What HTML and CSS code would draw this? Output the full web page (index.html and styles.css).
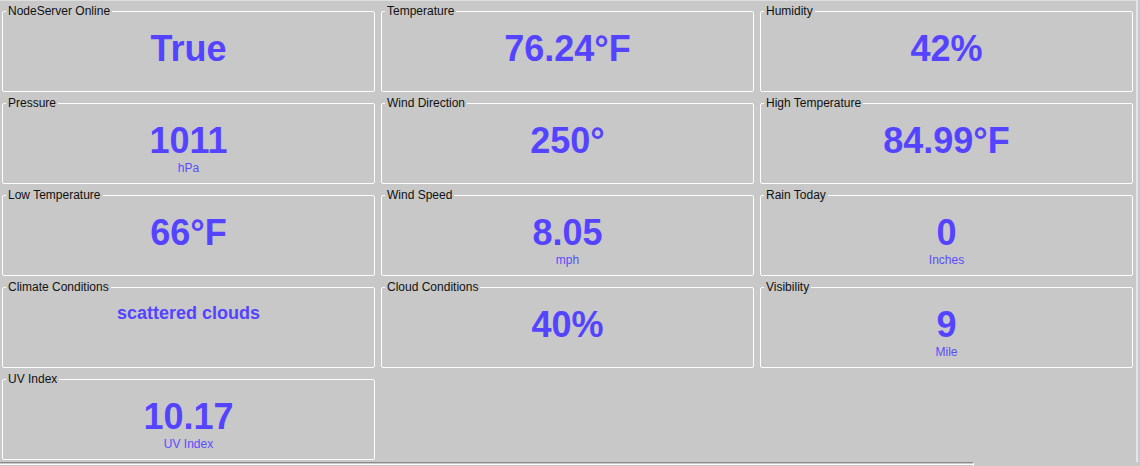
FILE: index.html
```html
<!DOCTYPE html>
<html>
<head>
<meta charset="utf-8">
<link rel="stylesheet" href="styles.css">
</head>
<body>
<div class="frame">
  <div class="grid">
    <fieldset class="card"><legend>NodeServer Online</legend><div class="value">True</div></fieldset>
    <fieldset class="card"><legend>Temperature</legend><div class="value">76.24°F</div></fieldset>
    <fieldset class="card"><legend>Humidity</legend><div class="value">42%</div></fieldset>

    <fieldset class="card"><legend>Pressure</legend><div class="value">1011</div><div class="unit">hPa</div></fieldset>
    <fieldset class="card"><legend>Wind Direction</legend><div class="value">250°</div></fieldset>
    <fieldset class="card"><legend>High Temperature</legend><div class="value">84.99°F</div></fieldset>

    <fieldset class="card"><legend>Low Temperature</legend><div class="value">66°F</div></fieldset>
    <fieldset class="card"><legend>Wind Speed</legend><div class="value">8.05</div><div class="unit">mph</div></fieldset>
    <fieldset class="card"><legend>Rain Today</legend><div class="value">0</div><div class="unit">Inches</div></fieldset>

    <fieldset class="card"><legend>Climate Conditions</legend><div class="value small">scattered clouds</div></fieldset>
    <fieldset class="card"><legend>Cloud Conditions</legend><div class="value">40%</div></fieldset>
    <fieldset class="card"><legend>Visibility</legend><div class="value">9</div><div class="unit">Mile</div></fieldset>

    <fieldset class="card"><legend>UV Index</legend><div class="value">10.17</div><div class="unit">UV Index</div></fieldset>
  </div>
</div>
<div class="status"></div>
</body>
</html>
```
FILE: styles.css
```css
html, body {
  margin: 0;
  padding: 0;
  background: #c8c8c8;
  overflow: hidden;
  font-family: "Liberation Sans", Arial, sans-serif;
}

.frame {
  box-sizing: border-box;
  width: 1138px;
  height: 462px;
  border-top: 1px solid #dedede;
  border-right: 2px solid #e2e6ea;
}

.grid {
  display: grid;
  grid-template-columns: 373px 373px 373px;
  grid-auto-rows: 88px;
  column-gap: 6px;
  row-gap: 4px;
  padding: 3px 0 0 2px;
}

.card {
  box-sizing: border-box;
  margin: 0;
  padding: 0 4px;
  min-width: 0;
  height: 88px;
  border: 1px solid #fff;
  border-radius: 2px;
  text-align: center;
}

.card legend {
  margin-left: -1px;
  padding: 0 2px;
  font-size: 12px;
  line-height: 14px;
  color: #111;
  text-align: left;
}

.value {
  margin-top: 10px;
  font-size: 36px;
  line-height: 41px;
  font-weight: bold;
  color: #5544ff;
}

.value.small {
  font-size: 18px;
  line-height: 21px;
  margin-top: 9px;
}

.unit {
  font-size: 12px;
  line-height: 14px;
  color: #5a4cff;
}

.status {
  box-sizing: border-box;
  width: 974px;
  height: 4px;
  border-top: 1px solid #8a8a8a;
  border-right: 1px solid #fff;
  background: linear-gradient(#c8c8c8 0 1px, #fff 1px 2px, #c8c8c8 2px);
}
```
